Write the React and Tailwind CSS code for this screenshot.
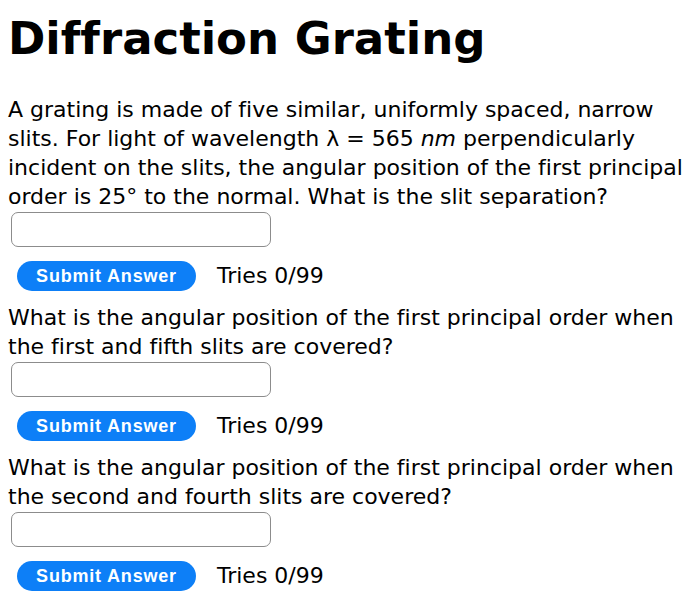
import React from "react";

function Answer() {
  return (
    <>
      <div className="ml-[3px] mt-[1px] h-[35px] w-[260px] rounded-[7px] border-[1.5px] border-[#8c8c8c] bg-white" />
      <div className="mt-[14px] flex h-[30px] items-center">
        <button className="ml-[9px] h-[30px] w-[179px] rounded-full bg-[#0d7ff7] text-[18px] font-bold leading-[30px] tracking-[0.8px] text-white [font-family:'Liberation_Sans',Arial,sans-serif]">
          Submit Answer
        </button>
        <span className="ml-[21px] text-[22px] leading-[30px] text-black">Tries 0/99</span>
      </div>
    </>
  );
}

export default function App() {
  return (
    <div className="min-h-[606px] w-[700px] overflow-hidden bg-white px-[8px] text-black [font-family:'DejaVu_Sans',Verdana,sans-serif] [font-variant-ligatures:none]">
      <h1 className="whitespace-nowrap pt-[12px] text-[45px] font-bold leading-[54px]">Diffraction Grating</h1>
      <p className="mt-[29px] whitespace-nowrap text-[22px] leading-[29px]">
        A grating is made of five similar, uniformly spaced, narrow
        <br />
        slits. For light of wavelength λ = 565 <i>nm</i> perpendicularly
        <br />
        incident on the slits, the angular position of the first principal
        <br />
        order is 25° to the normal. What is the slit separation?
      </p>
      <Answer />
      <p className="mt-[12px] whitespace-nowrap text-[22px] leading-[29px]">
        What is the angular position of the first principal order when
        <br />
        the first and fifth slits are covered?
      </p>
      <Answer />
      <p className="mt-[12px] whitespace-nowrap text-[22px] leading-[29px]">
        What is the angular position of the first principal order when
        <br />
        the second and fourth slits are covered?
      </p>
      <Answer />
    </div>
  );
}
